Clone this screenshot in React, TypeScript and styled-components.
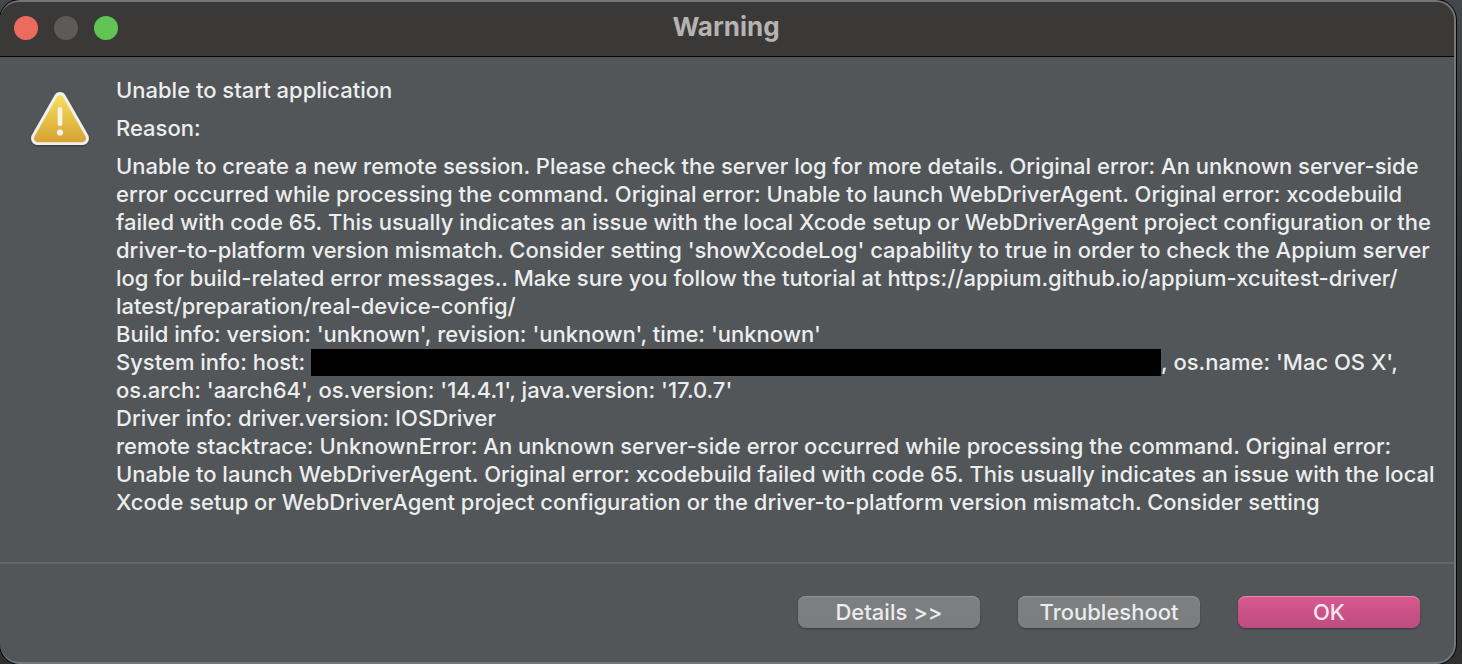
import React from "react";
import styled, { createGlobalStyle } from "styled-components";

const GlobalStyle = createGlobalStyle`
  *, *::before, *::after { box-sizing: border-box; }
  body {
    margin: 0;
    background: linear-gradient(180deg, #43484c 0, #3c4043 80px, #2e3032 50%, #303030 100%);
    font-family: Inter, "Liberation Sans", sans-serif;
    font-weight: 500;
    color: #eceded;
  }
`;

const Page = styled.div`
  min-height: 100vh;
  display: flex;
  padding-right: 6px;
`;

const Window = styled.section`
  flex: 1;
  min-width: 0;
  display: flex;
  flex-direction: column;
  overflow: hidden;
  background: #525659;
  border: solid #74777a;
  border-width: 2px 2px 2px 0;
  border-radius: 20px;
  box-shadow: 0 0 0 1px #050505;
`;

const TitleBar = styled.header`
  display: grid;
  grid-template-columns: 1fr auto 1fr;
  align-items: center;
  height: 55px;
  padding: 0 16px 2px 14px;
  background: #3a3937;
  border-bottom: 1px solid #050505;
`;

const Lights = styled.div`
  display: flex;
  gap: 16px;
`;

const Light = styled.button<{ $color: string }>`
  width: 24px;
  height: 24px;
  padding: 0;
  border: 0;
  border-radius: 50%;
  background: ${(p) => p.$color};
`;

const Title = styled.h1`
  margin: 0;
  padding-bottom: 2px;
  font-size: 26px;
  line-height: 32px;
  font-weight: 700;
  color: #b5b4b3;
`;

const Content = styled.main`
  flex: 1;
  display: grid;
  grid-template-columns: 60px 1fr;
  column-gap: 26px;
  padding: 19px 20px 44px 30px;
`;

const WarningIcon = styled.svg`
  width: 60px;
  height: 60px;
  margin-top: 12px;
`;

const Message = styled.div`
  display: flex;
  flex-direction: column;
  gap: 10px;
  white-space: nowrap;
`;

const Text = styled.p`
  margin: 0;
  font-size: 22px;
  line-height: 28px;
`;

const Redaction = styled.span`
  display: inline-block;
  width: 850px;
  height: 27px;
  vertical-align: bottom;
  background: #000;
`;

const Footer = styled.footer`
  display: flex;
  justify-content: flex-end;
  gap: 38px;
  padding: 32px 34px 34px;
  border-top: 2px solid #63676a;
`;

const Button = styled.button<{ $primary?: boolean }>`
  width: 182px;
  height: 32px;
  padding: 0;
  border: 0;
  border-radius: 8px;
  font: inherit;
  font-size: 22px;
  line-height: 32px;
  color: ${(p) => (p.$primary ? "#fae6ef" : "#ebecec")};
  background: ${(p) =>
    p.$primary ? "linear-gradient(#d8588f, #bd4c7f)" : "linear-gradient(#7d7f81, #7b7d7f)"};
  box-shadow:
    inset 0 1px 0 ${(p) => (p.$primary ? "#e58bb0" : "#949698")},
    0 1px 2px rgba(0, 0, 0, 0.35);
`;

const reason = [
  "Unable to create a new remote session. Please check the server log for more details. Original error: An unknown server-side",
  "error occurred while processing the command. Original error: Unable to launch WebDriverAgent. Original error: xcodebuild",
  "failed with code 65. This usually indicates an issue with the local Xcode setup or WebDriverAgent project configuration or the",
  "driver-to-platform version mismatch. Consider setting 'showXcodeLog' capability to true in order to check the Appium server",
  "log for build-related error messages.. Make sure you follow the tutorial at https://appium.github.io/appium-xcuitest-driver/",
  "latest/preparation/real-device-config/",
  "Build info: version: 'unknown', revision: 'unknown', time: 'unknown'",
];

const trace = [
  "os.arch: 'aarch64', os.version: '14.4.1', java.version: '17.0.7'",
  "Driver info: driver.version: IOSDriver",
  "remote stacktrace: UnknownError: An unknown server-side error occurred while processing the command. Original error:",
  "Unable to launch WebDriverAgent. Original error: xcodebuild failed with code 65. This usually indicates an issue with the local",
  "Xcode setup or WebDriverAgent project configuration or the driver-to-platform version mismatch. Consider setting",
];

const Lines = ({ items }: { items: string[] }) => (
  <>
    {items.map((line) => (
      <Text key={line}>{line}</Text>
    ))}
  </>
);

export default function App() {
  return (
    <>
      <GlobalStyle />
      <Page>
        <Window role="alertdialog" aria-labelledby="dialog-title">
          <TitleBar>
            <Lights>
              <Light $color="#ed6a5e" aria-label="Close" />
              <Light $color="#5c5b59" aria-label="Minimize" disabled />
              <Light $color="#61c554" aria-label="Zoom" />
            </Lights>
            <Title id="dialog-title">Warning</Title>
          </TitleBar>
          <Content>
            <WarningIcon viewBox="0 0 60 60" aria-hidden="true">
              <defs>
                <linearGradient id="amber" x1="0" y1="0" x2="0" y2="1">
                  <stop offset="0" stopColor="#f7df5c" />
                  <stop offset="1" stopColor="#d6a334" />
                </linearGradient>
                <filter id="shade" x="-10%" y="-10%" width="120%" height="125%">
                  <feDropShadow dx="0" dy="1" stdDeviation="0.8" floodOpacity="0.4" />
                </filter>
              </defs>
              <path
                d="M24.6 7.2C27 3 33 3 35.4 7.2L58 46.8C60.6 51.4 57.6 57 52.2 57H7.8C2.4 57 -.6 51.4 2 46.8Z"
                fill="#f0f0ee"
                filter="url(#shade)"
              />
              <path
                d="M27 9C28.3 6.7 31.7 6.7 33 9L55.4 48.3C57 51.2 55 54.2 52 54.2H8C5 54.2 3 51.2 4.6 48.3Z"
                fill="url(#amber)"
              />
              <rect x="27.7" y="19" width="4.6" height="19" rx="2" fill="#f5f3ec" />
              <circle cx="30" cy="44.5" r="3.1" fill="#f5f3ec" />
            </WarningIcon>
            <Message>
              <Text>Unable to start application</Text>
              <Text>Reason:</Text>
              <div>
                <Lines items={reason} />
                <Text>
                  System info: host: <Redaction />, os.name: 'Mac OS X',
                </Text>
                <Lines items={trace} />
              </div>
            </Message>
          </Content>
          <Footer>
            <Button type="button">Details &gt;&gt;</Button>
            <Button type="button">Troubleshoot</Button>
            <Button type="button" $primary>
              OK
            </Button>
          </Footer>
        </Window>
      </Page>
    </>
  );
}
